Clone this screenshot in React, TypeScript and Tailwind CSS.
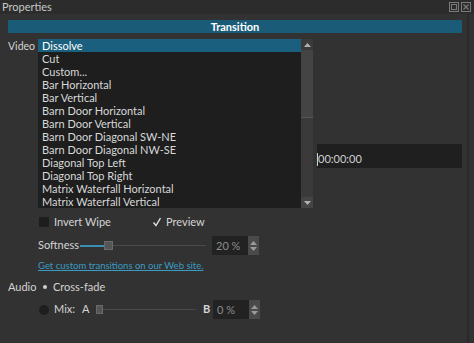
import React from "react";

const items = [
  "Dissolve",
  "Cut",
  "Custom...",
  "Bar Horizontal",
  "Bar Vertical",
  "Barn Door Horizontal",
  "Barn Door Vertical",
  "Barn Door Diagonal SW-NE",
  "Barn Door Diagonal NW-SE",
  "Diagonal Top Left",
  "Diagonal Top Right",
  "Matrix Waterfall Horizontal",
  "Matrix Waterfall Vertical",
];

function Spin({ value }: { value: string }) {
  return (
    <div className="flex h-[19px] w-[47px] bg-[#222222]">
      <div className="flex-1 pl-[4px] text-[11px] leading-[19px] text-[#8c8c8c]">{value}</div>
      <div className="flex w-[11px] flex-col items-center justify-center gap-[2px] bg-[#4a4a4a]">
        <svg width="7" height="4" viewBox="0 0 7 4">
          <path d="M0 4 L3.5 0 L7 4 Z" fill="#9a9a9a" />
        </svg>
        <svg width="7" height="4" viewBox="0 0 7 4">
          <path d="M0 0 L3.5 4 L7 0 Z" fill="#9a9a9a" />
        </svg>
      </div>
    </div>
  );
}

export default function App() {
  return (
    <div
      className="flex h-[343px] w-[474px] flex-col overflow-hidden bg-[#323232] text-[#d4d4d4]"
      style={{ fontFamily: "Lato, 'Noto Sans', sans-serif" }}
    >
      {/* title bar */}
      <div className="flex h-[14px] items-center justify-between bg-[#2c2c2c] pl-[2px] pr-[3px]">
        <span className="text-[11px] leading-[14px] text-[#c8c8c8]">Properties</span>
        <div className="flex gap-[2px]">
          <svg width="10" height="10" viewBox="0 0 10 10">
            <rect x="0.5" y="0.5" width="9" height="9" fill="none" stroke="#7a7a7a" />
            <rect x="2.5" y="2.5" width="5" height="5" fill="none" stroke="#7a7a7a" />
          </svg>
          <svg width="10" height="10" viewBox="0 0 10 10">
            <rect x="0.5" y="0.5" width="9" height="9" fill="none" stroke="#7a7a7a" />
            <path d="M2.5 2.5 L7.5 7.5 M7.5 2.5 L2.5 7.5" stroke="#7a7a7a" strokeWidth="1.2" />
          </svg>
        </div>
      </div>

      <div className="flex flex-1">
        <div className="flex-1 pl-[8px] pr-[5px] pt-[6px]">
          {/* header */}
          <div className="h-[13px] bg-[#1a5c78] text-center text-[11px] font-bold leading-[13px] text-white">
            Transition
          </div>

          {/* video row */}
          <div className="mt-[6px] flex">
            <div className="w-[30px] pt-[1px] text-[10.5px] leading-[13px]">Video</div>
            <div className="flex h-[169px] w-[275px] bg-[#1e1e1e]">
              <div className="flex-1">
                {items.map((it, i) => (
                  <div
                    key={it}
                    className={
                      "h-[13px] pl-[4px] text-[11px] leading-[13px] " +
                      (i === 0 ? "bg-[#1a5f7e] text-white" : "text-[#d8d8d8]")
                    }
                  >
                    {it}
                  </div>
                ))}
              </div>
              <div className="flex w-[12px] flex-col bg-[#3a3a3a]">
                <div className="flex h-[11px] items-center justify-center">
                  <svg width="7" height="4" viewBox="0 0 7 4">
                    <path d="M0 4 L3.5 0 L7 4 Z" fill="#b0b0b0" />
                  </svg>
                </div>
                <div className="h-[68px] border-b border-[#555] bg-[#444444]" />
                <div className="flex-1" />
                <div className="flex h-[11px] items-center justify-center bg-[#444444]">
                  <svg width="7" height="4" viewBox="0 0 7 4">
                    <path d="M0 0 L3.5 4 L7 0 Z" fill="#b0b0b0" />
                  </svg>
                </div>
              </div>
            </div>
            <div className="ml-[4px] flex-1 pt-[105px]">
              <div className="flex h-[24px] items-end bg-[#1f1f1f] pb-[3px]">
                <span className="mb-[-1px] h-[13px] w-[1px] bg-[#cfcfcf]" />
                <span className="text-[11px] leading-[12px] text-[#d0d0d0]">00:00:00</span>
              </div>
            </div>
          </div>

          {/* checkboxes */}
          <div className="mt-[8px] flex items-center pl-[31px] text-[11px] leading-[12px]">
            <span className="h-[10px] w-[10px] bg-[#1e1e1e]" />
            <span className="ml-[5px] w-[98px]">Invert Wipe</span>
            <svg width="10" height="10" viewBox="0 0 10 10">
              <path d="M1.5 5.5 L4 8.5 L8.5 1" fill="none" stroke="#e0e0e0" strokeWidth="1.4" />
            </svg>
            <span className="ml-[4px]">Preview</span>
          </div>

          {/* softness */}
          <div className="mt-[8px] flex items-center pl-[30px] text-[11px]">
            <span className="w-[42px]">Softness</span>
            <div className="relative flex h-[12px] w-[126px] items-center">
              <div className="h-[2px] w-[24px] bg-[#3b8db3]" />
              <div className="h-[9px] w-[9px] border border-[#6a6a6a] bg-[#555555]" />
              <div className="h-[1px] flex-1 bg-[#4a4a4a]" />
            </div>
            <div className="ml-[6px]">
              <Spin value="20 %" />
            </div>
          </div>

          {/* link */}
          <div className="mt-[4px] pl-[30px] text-[9.5px] leading-[14px] text-[#3a9cc4] underline">
            Get custom transitions on our Web site.
          </div>

          {/* audio */}
          <div className="mt-[7px] flex items-center text-[11px] leading-[13px]">
            <span className="w-[32px]">Audio</span>
            <span className="flex h-[10px] w-[10px] items-center justify-center rounded-full bg-[#333]">
              <span className="h-[4px] w-[4px] rounded-full bg-[#cfcfcf]" />
            </span>
            <span className="ml-[3px]">Cross-fade</span>
          </div>

          <div className="mt-[7px] flex items-center pl-[31px] text-[11px]">
            <span className="h-[10px] w-[10px] rounded-full bg-[#1e1e1e]" />
            <span className="ml-[5px] w-[28px]">Mix:</span>
            <span className="w-[14px]">A</span>
            <div className="flex h-[12px] w-[100px] items-center">
              <div className="h-[9px] w-[7px] border border-[#6a6a6a] bg-[#555555]" />
              <div className="h-[1px] flex-1 bg-[#4a4a4a]" />
            </div>
            <span className="ml-[7px] w-[10px] font-bold">B</span>
            <Spin value="0 %" />
          </div>
        </div>
        <div className="w-[2px] bg-[#2a2a2a]" />
        <div className="w-[5px]" />
      </div>
    </div>
  );
}
